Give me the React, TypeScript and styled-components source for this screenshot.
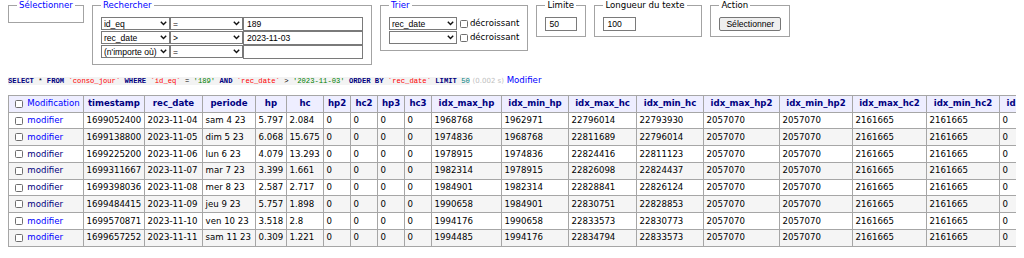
import React from "react";
import styled, { createGlobalStyle } from "styled-components";

type Column = { name: string; width: number };

const GlobalStyle = createGlobalStyle`
  html, body {
    margin: 0;
    padding: 0;
    background: #fff;
    overflow: hidden;
  }
  body {
    font-family: "DejaVu Sans", Verdana, sans-serif;
    font-size: 8.6px;
    line-height: 1.25;
    color: #000;
  }
`;

const Page = styled.div`
  padding: 0 8px;
`;

const FilterForm = styled.form`
  display: flex;
  align-items: flex-start;
  gap: 8px;
`;

const Box = styled.fieldset<{ $w?: number }>`
  box-sizing: border-box;
  width: ${(p) => (p.$w ? `${p.$w}px` : "auto")};
  margin: 0;
  padding: 6px 8px 5px;
  border: 1px solid #a3a3a3;
  min-width: 0;
`;

const Legend = styled.legend<{ $link?: boolean }>`
  padding: 0 2px;
  line-height: 10.75px;
  color: ${(p) => (p.$link ? "#0000ff" : "#000")};
`;

const FieldRow = styled.div`
  display: flex;
  align-items: center;
  height: 14px;
`;

const SelectBox = styled.span<{ $w: number }>`
  position: relative;
  display: inline-block;
  width: ${(p) => p.$w}px;
  height: 13px;
`;

const NativeSelect = styled.select`
  appearance: none;
  width: 100%;
  height: 100%;
  margin: 0;
  padding: 0 10px 0 2px;
  border: 1px solid #7a7a7a;
  border-radius: 0;
  background: #fff;
  color: #000;
  font-family: "Liberation Sans", Arial, sans-serif;
  font-size: 8.6px;
`;

const Chevron = styled.svg`
  position: absolute;
  right: 3px;
  top: 4px;
  pointer-events: none;
`;

const TextField = styled.input<{ $w: number }>`
  box-sizing: border-box;
  width: ${(p) => p.$w}px;
  height: 14px;
  margin: 0;
  padding: 0 3px;
  border: 1px solid #7a7a7a;
  font-family: "Liberation Sans", Arial, sans-serif;
  font-size: 8.6px;
  color: #000;
`;

const Tick = styled.input.attrs({ type: "checkbox" })`
  appearance: none;
  box-sizing: border-box;
  width: 8px;
  height: 8px;
  margin: 0 2px 0 3px;
  border: 1px solid #6e6e6e;
  border-radius: 1.5px;
  background: #fff;
  vertical-align: middle;
  flex-shrink: 0;
`;

const ActionButton = styled.button`
  height: 14px;
  margin: 0;
  padding: 0 6px;
  border: 1px solid #767676;
  border-radius: 2px;
  background: #efefef;
  color: #000;
  font-family: "Liberation Sans", Arial, sans-serif;
  font-size: 8.6px;
  line-height: 12px;
`;

const QueryLine = styled.p`
  margin: 10px 0 9px;
  white-space: nowrap;
`;

const Code = styled.code`
  font-family: "Liberation Mono", "DejaVu Sans Mono", monospace;
  font-size: 7.2px;
  background: #f3f3f3;
`;

const Kw = styled.a`
  color: #000080;
  font-weight: bold;
  text-decoration: none;
`;

const Ident = styled.span`
  color: #ff0000;
`;

const Str = styled.span`
  color: #008000;
`;

const Num = styled.span`
  color: #007f7f;
`;

const Time = styled.span`
  color: #c0c0c0;
  font-size: 7px;
`;

const Link = styled.a<{ $visited?: boolean }>`
  color: ${(p) => (p.$visited ? "#000080" : "#0000ff")};
  text-decoration: none;
`;

const TableWrap = styled.div`
  overflow: hidden;
`;

const Grid = styled.table<{ $w: number }>`
  border-collapse: collapse;
  table-layout: fixed;
  width: ${(p) => p.$w}px;
`;

const HeadCell = styled.th<{ $first?: boolean }>`
  background: #eeeeff;
  border: 1px solid #a6a6a6;
  padding: 2.5px 2.6px;
  line-height: 10.75px;
  white-space: nowrap;
  overflow: hidden;
  font-weight: ${(p) => (p.$first ? "normal" : "bold")};
  text-align: ${(p) => (p.$first ? "left" : "center")};
`;

const BodyRow = styled.tr`
  &:nth-child(even) {
    background: #f5f5f5;
  }
`;

const Cell = styled.td`
  border: 1px solid #a6a6a6;
  padding: 2.5px 2.6px;
  line-height: 10.75px;
  white-space: nowrap;
  overflow: hidden;
`;

const columns: Column[] = [
  { name: "timestamp", width: 61 },
  { name: "rec_date", width: 58 },
  { name: "periode", width: 53 },
  { name: "hp", width: 31 },
  { name: "hc", width: 37 },
  { name: "hp2", width: 27 },
  { name: "hc2", width: 27 },
  { name: "hp3", width: 27 },
  { name: "hc3", width: 27 },
  { name: "idx_max_hp", width: 70 },
  { name: "idx_min_hp", width: 67 },
  { name: "idx_max_hc", width: 68 },
  { name: "idx_min_hc", width: 67 },
  { name: "idx_max_hp2", width: 76 },
  { name: "idx_min_hp2", width: 73 },
  { name: "idx_max_hc2", width: 74 },
  { name: "idx_min_hc2", width: 73 },
  { name: "idx_max_hp3", width: 76 },
  { name: "idx_min_hp3", width: 73 },
];

const EDIT_COL = 75;

const raw: string[][] = [
  ["1699052400", "2023-11-04", "sam 4 23", "5.797", "2.084", "1968768", "1962971", "22796014", "22793930"],
  ["1699138800", "2023-11-05", "dim 5 23", "6.068", "15.675", "1974836", "1968768", "22811689", "22796014"],
  ["1699225200", "2023-11-06", "lun 6 23", "4.079", "13.293", "1978915", "1974836", "22824416", "22811123"],
  ["1699311667", "2023-11-07", "mar 7 23", "3.399", "1.661", "1982314", "1978915", "22826098", "22824437"],
  ["1699398036", "2023-11-08", "mer 8 23", "2.587", "2.717", "1984901", "1982314", "22828841", "22826124"],
  ["1699484415", "2023-11-09", "jeu 9 23", "5.757", "1.898", "1990658", "1984901", "22830751", "22828853"],
  ["1699570871", "2023-11-10", "ven 10 23", "3.518", "2.8", "1994176", "1990658", "22833573", "22830773"],
  ["1699657252", "2023-11-11", "sam 11 23", "0.309", "1.221", "1994485", "1994176", "22834794", "22833573"],
];

// hp2..hc3 are always 0, the *_hp2/*_hc2 meters never move
const rows = raw.map(([ts, date, per, hp, hc, maxHp, minHp, maxHc, minHc]) => [
  ts, date, per, hp, hc, "0", "0", "0", "0",
  maxHp, minHp, maxHc, minHc,
  "2057070", "2057070", "2161665", "2161665", "0", "0",
]);

const visitedRows = [2, 3, 4, 5];

const Select = ({ width, value }: { width: number; value: string }) => (
  <SelectBox $w={width}>
    <NativeSelect defaultValue={value}>
      <option value={value}>{value}</option>
    </NativeSelect>
    <Chevron width="7" height="5" viewBox="0 0 7 5">
      <path d="M0.8 0.8 L3.5 3.6 L6.2 0.8" fill="none" stroke="#111" strokeWidth="1.4" />
    </Chevron>
  </SelectBox>
);

const searches = [
  { col: "id_eq", op: "=", val: "189" },
  { col: "rec_date", op: ">", val: "2023-11-03" },
  { col: "(n'importe où)", op: "=", val: "" },
];

export default function App() {
  const tableWidth = EDIT_COL + columns.reduce((s, c) => s + c.width, 0);
  return (
    <Page>
      <GlobalStyle />
      <FilterForm>
        <Box>
          <Legend $link>Sélectionner</Legend>
        </Box>
        <Box>
          <Legend $link>Rechercher</Legend>
          {searches.map((s, i) => (
            <FieldRow key={i}>
              <Select width={69} value={s.col} />
              <Select width={73} value={s.op} />
              <TextField $w={120} defaultValue={s.val} />
            </FieldRow>
          ))}
        </Box>
        <Box>
          <Legend $link>Trier</Legend>
          <FieldRow>
            <Select width={68} value="rec_date" />
            <Tick />
            décroissant
          </FieldRow>
          <FieldRow>
            <Select width={68} value="" />
            <Tick />
            décroissant
          </FieldRow>
        </Box>
        <Box>
          <Legend>Limite</Legend>
          <TextField $w={32} defaultValue="50" />
        </Box>
        <Box $w={108}>
          <Legend>Longueur du texte</Legend>
          <TextField $w={33} defaultValue="100" />
        </Box>
        <Box>
          <Legend>Action</Legend>
          <ActionButton type="button">Sélectionner</ActionButton>
        </Box>
      </FilterForm>

      <QueryLine>
        <Code>
          <Kw>SELECT</Kw> * <Kw>FROM</Kw> <Ident>`conso_jour`</Ident> <Kw>WHERE</Kw>{" "}
          <Ident>`id_eq`</Ident> = <Str>'189'</Str> <Kw>AND</Kw> <Ident>`rec_date`</Ident> &gt;{" "}
          <Str>'2023-11-03'</Str> <Kw>ORDER BY</Kw> <Ident>`rec_date`</Ident> <Kw>LIMIT</Kw>{" "}
          <Num>50</Num>
        </Code>{" "}
        <Time>(0.002 s)</Time> <Link>Modifier</Link>
      </QueryLine>

      <TableWrap>
        <Grid $w={tableWidth}>
          <colgroup>
            <col style={{ width: EDIT_COL }} />
            {columns.map((c) => (
              <col key={c.name} style={{ width: c.width }} />
            ))}
          </colgroup>
          <thead>
            <tr>
              <HeadCell $first>
                <Tick />
                <Link> Modification</Link>
              </HeadCell>
              {columns.map((c) => (
                <HeadCell key={c.name}>
                  <Link $visited>{c.name}</Link>
                </HeadCell>
              ))}
            </tr>
          </thead>
          <tbody>
            {rows.map((r, i) => (
              <BodyRow key={r[0]}>
                <Cell>
                  <Tick />
                  <Link $visited={visitedRows.includes(i)}> modifier</Link>
                </Cell>
                {r.map((v, j) => (
                  <Cell key={j}>{v}</Cell>
                ))}
              </BodyRow>
            ))}
          </tbody>
        </Grid>
      </TableWrap>
    </Page>
  );
}
